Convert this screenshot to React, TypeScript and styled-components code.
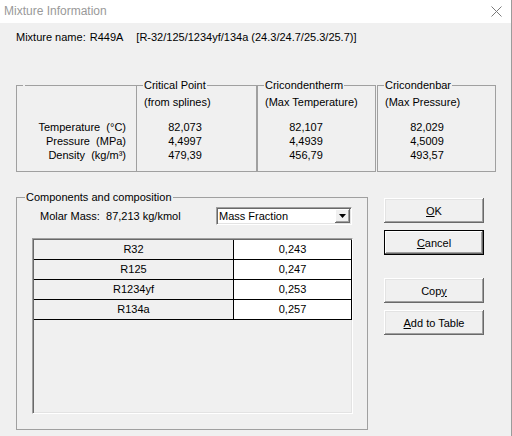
import React from 'react'
import styled, { createGlobalStyle, css } from 'styled-components'

const properties = [
    { label: 'Temperature  (°C)' },
    { label: 'Pressure  (MPa)' },
    { label: 'Density  (kg/m³)' },
]

const points = [
    { title: 'Critical Point', subtitle: '(from splines)', values: ['82,073', '4,4997', '479,39'], width: 121, offset: -1, padRight: 23 },
    { title: 'Cricondentherm', subtitle: '(Max Temperature)', values: ['82,107', '4,4939', '456,79'], width: 119, offset: 0, padRight: 21 },
    { title: 'Cricondenbar', subtitle: '(Max Pressure)', values: ['82,029', '4,5009', '493,57'], width: 119, offset: 1, padRight: 19 },
]

const components = [
    { name: 'R32', value: '0,243' },
    { name: 'R125', value: '0,247' },
    { name: 'R1234yf', value: '0,253' },
    { name: 'R134a', value: '0,257' },
]

export default function App() {
    return (
        <>
            <GlobalStyle />
            <Window>
                <TitleBar>
                    <Title>Mixture Information</Title>
                    <CloseIcon viewBox="0 0 11 11" width={11} height={11}>
                        <path d="M0.5 0.5 L10.5 10.5 M10.5 0.5 L0.5 10.5" />
                    </CloseIcon>
                </TitleBar>
                <Body>
                    <NameRow>
                        <span>Mixture name:</span>
                        <NameValue>R449A</NameValue>
                        <NameDescription>[R-32/125/1234yf/134a (24.3/24.7/25.3/25.7)]</NameDescription>
                    </NameRow>

                    <PropsRow>
                        <PropBox $width={121} $offset={0}>
                            <Legend />
                            <Subtitle />
                            <ValueList $align="right" $padRight={10}>
                                {properties.map(p => (
                                    <ValueLine key={p.label}>{p.label}</ValueLine>
                                ))}
                            </ValueList>
                        </PropBox>
                        {points.map(point => (
                            <PropBox key={point.title} $width={point.width} $offset={point.offset}>
                                <Legend>{point.title}</Legend>
                                <Subtitle>{point.subtitle}</Subtitle>
                                <ValueList $align="center" $padRight={point.padRight}>
                                    {point.values.map(v => (
                                        <ValueLine key={v}>{v}</ValueLine>
                                    ))}
                                </ValueList>
                            </PropBox>
                        ))}
                    </PropsRow>

                    <LowerRow>
                        <CompositionBox>
                            <Legend>Components and composition</Legend>
                            <MolarRow>
                                <MolarText>Molar Mass:  87,213 kg/kmol</MolarText>
                                <Dropdown>
                                    <DropdownText>Mass Fraction</DropdownText>
                                    <DropdownButton>
                                        <svg viewBox="0 0 7 4" width={7} height={4}>
                                            <path d="M0 0 H7 L3.5 4 Z" fill="#000" />
                                        </svg>
                                    </DropdownButton>
                                </Dropdown>
                            </MolarRow>
                            <Grid>
                                {components.map(c => (
                                    <GridRow key={c.name}>
                                        <GridCell $kind="label">{c.name}</GridCell>
                                        <GridCell $kind="value">{c.value}</GridCell>
                                    </GridRow>
                                ))}
                            </Grid>
                        </CompositionBox>

                        <ButtonColumn>
                            <Button>
                                <u>O</u>K
                            </Button>
                            <Button $isDefault>
                                <u>C</u>ancel
                            </Button>
                            <Button $gapTop={23}>
                                Cop<u>y</u>
                            </Button>
                            <Button>
                                <u>A</u>dd to Table
                            </Button>
                        </ButtonColumn>
                    </LowerRow>
                </Body>
            </Window>
        </>
    )
}

const GlobalStyle = createGlobalStyle`
    html, body {
        margin: 0;
        padding: 0;
        background: #f0f0f0;
    }
    body {
        font-family: 'Liberation Sans', Arial, sans-serif;
        font-size: 11px;
        color: #000;
    }
`

const Window = styled.div`
    width: 512px;
    height: 436px;
    box-sizing: border-box;
    border-right: 1px solid #9b9b9b;
    background: #f0f0f0;
    display: flex;
    flex-direction: column;
    overflow: hidden;
`

const TitleBar = styled.div`
    flex: none;
    height: 23px;
    box-sizing: border-box;
    padding: 0 9px 2px 4px;
    background: #fff;
    display: flex;
    align-items: center;
    justify-content: space-between;
`

const Title = styled.span`
    font-size: 12px;
    color: #999;
`

const CloseIcon = styled.svg`
    stroke: #7a7a7a;
    stroke-width: 1;
    fill: none;
    margin-top: 1px;
`

const Body = styled.div`
    display: flex;
    flex-direction: column;
    padding: 8px 0 0 16px;
`

const NameRow = styled.div`
    display: flex;
    height: 13px;
    line-height: 13px;
    white-space: pre;
`

const NameValue = styled.span`
    margin-left: 4px;
`

const NameDescription = styled.span`
    margin-left: 13px;
`

const PropsRow = styled.div`
    display: flex;
    margin-top: 35px;
`

const groupBorder = css`
    margin: 0;
    min-width: 0;
    box-sizing: border-box;
    border: 1px solid #a0a0a0;
`

const PropBox = styled.fieldset<{ $width: number; $offset: number }>`
    ${groupBorder}
    width: ${({ $width }) => $width}px;
    margin-left: ${({ $offset }) => $offset}px;
    padding: 4px 0 9px;
`

const Legend = styled.legend`
    height: 13px;
    line-height: 13px;
    padding: 0 1px;
    margin-left: 6px;
    white-space: pre;
`

const Subtitle = styled.div`
    height: 13px;
    line-height: 13px;
    padding-left: 7px;
    white-space: pre;
`

const ValueList = styled.div<{ $align: 'right' | 'center'; $padRight: number }>`
    margin-top: 11px;
    display: flex;
    flex-direction: column;
    text-align: ${({ $align }) => $align};
    padding-right: ${({ $padRight }) => $padRight}px;
`

const ValueLine = styled.div`
    height: 14px;
    line-height: 14px;
    white-space: pre;
`

const LowerRow = styled.div`
    display: flex;
    align-items: flex-start;
    margin-top: 19px;
`

const CompositionBox = styled.fieldset`
    ${groupBorder}
    width: 352px;
    padding: 0 14px 15px 15px;

    & > legend {
        margin-left: -7px;
    }
`

const MolarRow = styled.div`
    display: flex;
    align-items: center;
    height: 18px;
    margin-top: 3px;
`

const MolarText = styled.span`
    width: 176px;
    padding-left: 8px;
    white-space: pre;
`

const Dropdown = styled.div`
    width: 136px;
    height: 18px;
    box-sizing: border-box;
    background: #fff;
    border: 1px solid;
    border-color: #a0a0a0 #fff #fff #a0a0a0;
    box-shadow: inset 1px 1px #696969, inset -1px -1px #e3e3e3;
    display: flex;
    align-items: center;
    padding: 1px 1px 1px 2px;
`

const DropdownText = styled.span`
    flex: 1;
    line-height: 14px;
`

const DropdownButton = styled.div`
    width: 15px;
    height: 14px;
    box-sizing: border-box;
    background: #f0f0f0;
    box-shadow: inset -1px -1px #696969, inset 1px 1px #fff, inset -2px -2px #a0a0a0;
    display: flex;
    align-items: center;
    justify-content: center;
`

const Grid = styled.div`
    width: 321px;
    height: 176px;
    box-sizing: border-box;
    margin-top: 13px;
    border: 1px solid;
    border-color: #a0a0a0 #fff #fff #a0a0a0;
    box-shadow: inset 1px 1px #696969, inset -1px -1px #e3e3e3;
    padding: 1px 0 0 1px;
    background: #f0f0f0;
`

const GridRow = styled.div`
    display: grid;
    grid-template-columns: 200px 118px;
    height: 20px;
    box-sizing: border-box;
    border-bottom: 1px solid #000;
`

const GridCell = styled.div<{ $kind: 'label' | 'value' }>`
    border-right: 1px solid #000;
    background: ${({ $kind }) => ($kind === 'label' ? '#f0f0f0' : '#fff')};
    text-align: center;
    line-height: 19px;
`

const ButtonColumn = styled.div`
    display: flex;
    flex-direction: column;
    margin-left: 16px;
    padding-top: 7px;
`

const Button = styled.button<{ $isDefault?: boolean; $gapTop?: number }>`
    width: 100px;
    height: 25px;
    margin: ${({ $gapTop }) => $gapTop ?? 7}px 0 0;
    &:first-child {
        margin-top: 0;
    }
    padding: 0;
    font-family: inherit;
    font-size: 11px;
    color: #000;
    background: #f0f0f0;
    border: none;
    box-shadow: inset -1px -1px #696969, inset 1px 1px #fff, inset -2px -2px #a0a0a0, inset 2px 2px #e3e3e3;

    ${({ $isDefault }) =>
        $isDefault &&
        css`
            border: 1px solid #000;
            box-shadow: inset -1px -1px #696969, inset 1px 1px #fff, inset -2px -2px #a0a0a0;
        `}

    & u {
        text-underline-offset: 1px;
    }
`
